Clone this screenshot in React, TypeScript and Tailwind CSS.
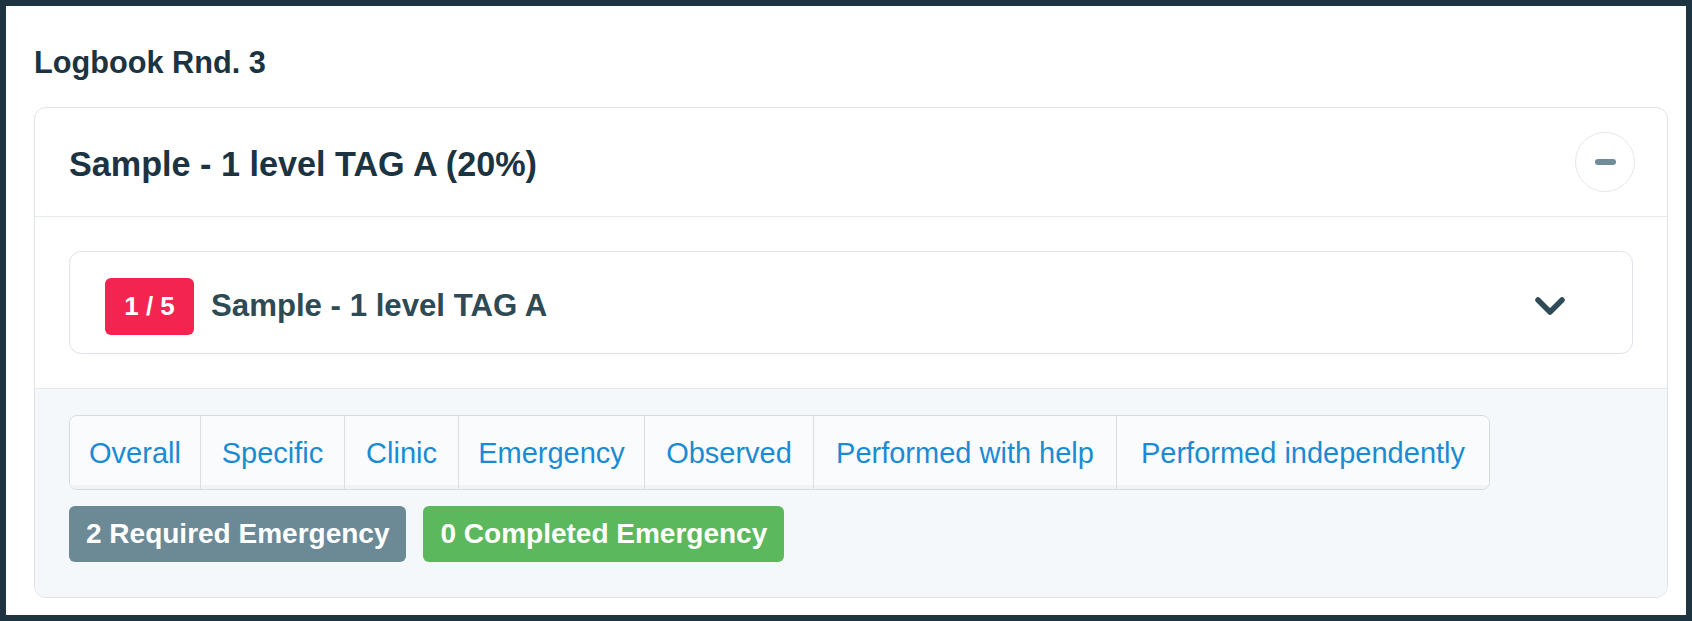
const tabs = [
  { label: 'Overall', w: 'w-[131px]' },
  { label: 'Specific', w: 'w-[144px]' },
  { label: 'Clinic', w: 'w-[114px]' },
  { label: 'Emergency', w: 'w-[186px]' },
  { label: 'Observed', w: 'w-[169px]' },
  { label: 'Performed with help', w: 'w-[303px]' },
  { label: 'Performed independently', w: 'w-[372px]' },
];

export default function App() {
  return (
    <div
      className="h-[621px] bg-[#1e3441] p-[6px]"
      style={{ fontFamily: '"Liberation Sans", Arial, sans-serif' }}
    >
      <div className="h-full bg-white pl-[28px] pr-[18px] pt-[39px]">
        <h2 className="text-[30.7px] leading-[36px] font-bold text-[#1c3341]">Logbook Rnd. 3</h2>

        <div className="mt-[26px] rounded-[12px] border border-[#dde3e8] overflow-hidden">
          {/* Header */}
          <div className="flex h-[109px] items-center justify-between border-b border-[#e6ebef] pl-[34px] pr-[32px]">
            <h3 className="mt-[6px] text-[34.2px] font-bold text-[#1c3341]">Sample - 1 level TAG A (20%)</h3>
            <button className="flex h-[60px] w-[60px] items-center justify-center rounded-full border border-[#e3e8ec] bg-white">
              <span className="block h-[6px] w-[21px] rounded-[3px] bg-[#6f8c98]" />
            </button>
          </div>

          {/* Body */}
          <div className="px-[34px] py-[34px]">
            <div className="flex h-[103px] items-center justify-between rounded-[12px] border border-[#dde3e8] pt-[8px] pl-[35px] pr-[67px]">
              <div className="flex items-center gap-[17px]">
                <span className="flex h-[57px] w-[89px] items-center justify-center rounded-[6px] bg-[#f32450] text-[26px] font-bold text-white">
                  1 / 5
                </span>
                <span className="text-[31.2px] font-bold text-[#2e4a55]">Sample - 1 level TAG A</span>
              </div>
              <svg width="30" height="19" viewBox="0 0 30 19" fill="none">
                <path d="M3 3l12 12L27 3" stroke="#2f4b57" strokeWidth="5.5" strokeLinecap="round" strokeLinejoin="round" />
              </svg>
            </div>
          </div>

          {/* Footer */}
          <div className="border-t border-[#e5eaee] bg-[#f5f8fb] px-[34px] pt-[26px] pb-[35px]">
            <div className="inline-flex h-[75px] overflow-hidden rounded-[8px] border border-[#d5dce1]">
              {tabs.map((t, i) => (
                <div
                  key={t.label}
                  className={`flex ${t.w} items-center justify-center bg-[#fafbfc] pt-[3px] text-[29px] text-[#1a8bd2] shadow-[inset_0_-4px_0_rgba(0,0,0,0.03)] ${
                    i < tabs.length - 1 ? 'border-r border-[#d9dfe3]' : ''
                  }`}
                >
                  {t.label}
                </div>
              ))}
            </div>

            <div className="mt-[16px] flex gap-[17px]">
              <span className="flex h-[56px] items-center rounded-[6px] bg-[#6b8a96] px-[17px] text-[28px] font-bold text-white">
                2 Required Emergency
              </span>
              <span className="flex h-[56px] items-center rounded-[6px] bg-[#5cb85c] px-[17px] text-[28px] font-bold text-white">
                0 Completed Emergency
              </span>
            </div>
          </div>
        </div>
      </div>
    </div>
  );
}
